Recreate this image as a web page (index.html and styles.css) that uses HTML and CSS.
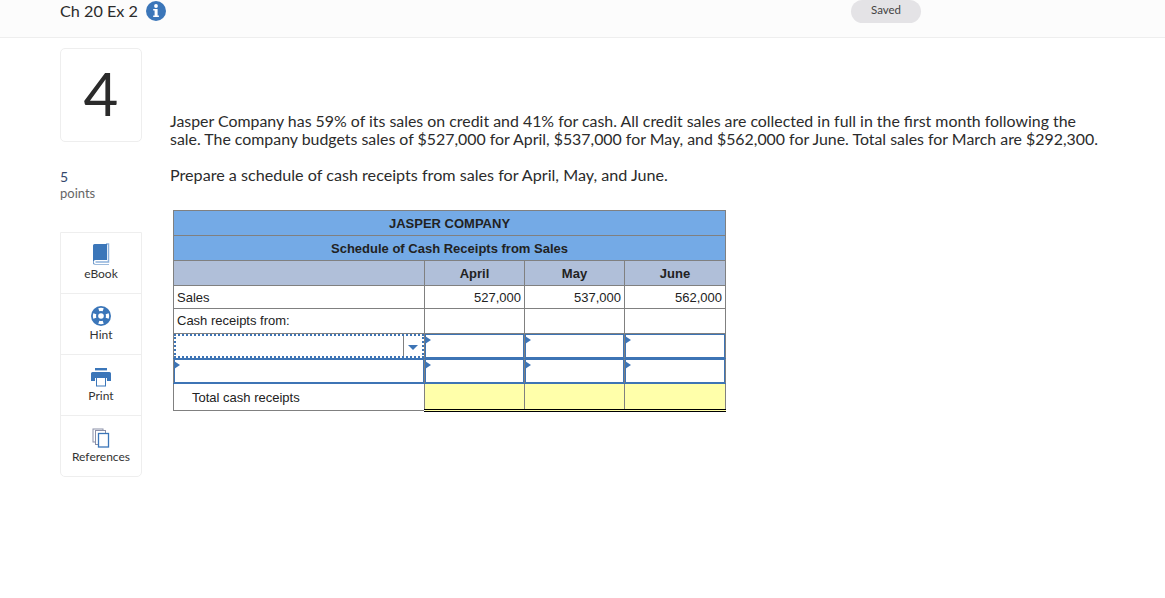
FILE: index.html
```html
<!DOCTYPE html>
<html lang="en">
<head>
  <meta charset="UTF-8">
  <title>Ch 20 Ex 2</title>
  <meta name="viewport" content="width=device-width, initial-scale=1.0">
  <link rel="stylesheet" href="styles.css">
</head>
<body>
  <div class="top-bar">
    <div class="title">
      <span>Ch 20 Ex 2</span>
      <svg class="info-icon" width="20" height="20" viewBox="0 0 20 20">
        <circle cx="10" cy="10" r="10" fill="#3b76b9"/>
        <circle cx="10" cy="5" r="1.9" fill="#fff"/>
        <path d="M7.2 8h4.4v6.4h1.300V16H7.200v-1.600h1.400V9.600H7.200z" fill="#fff"/>
      </svg>
    </div>
    <div class="saved">Saved</div>
  </div>

  <div class="main">
    <div class="side">
      <div class="number-card">4</div>
      <div class="points">
        <div class="points-num">5</div>
        <div class="points-label">points</div>
      </div>
      <div class="tools">
        <div class="tool">
          <svg width="18" height="22" viewBox="0 0 18 22">
            <path d="M14 1h2.500v18H3.500" fill="none" stroke="#8fb2dc" stroke-width="1.500"/>
            <path d="M1 18.500V2.500A1.500 1.500 0 0 1 2.500 1H15v16H3.500a2 2 0 0 0 0 4H17v.6H3A2 2 0 0 1 1 19.500z" fill="#3b76b9"/>
          </svg>
          <span>eBook</span>
        </div>
        <div class="tool">
          <svg width="20" height="20" viewBox="0 0 20 20">
            <circle cx="10" cy="10" r="10" fill="#3b76b9"/>
            <circle cx="10" cy="10" r="2.800" fill="#fff"/>
            <path d="M7.800 3.800a6.600 6.600 0 0 1 4.400 0M16.200 7.800a6.600 6.600 0 0 1 0 4.400M12.200 16.200a6.600 6.600 0 0 1-4.400 0M3.800 12.200a6.600 6.600 0 0 1 0-4.400" fill="none" stroke="#fff" stroke-width="3.200"/>
          </svg>
          <span>Hint</span>
        </div>
        <div class="tool">
          <svg width="20" height="20" viewBox="0 0 20 20">
            <rect x="4" y="1" width="12" height="2.400" fill="#3b76b9"/>
            <path d="M1.500 5h17A1.500 1.500 0 0 1 20 6.500V14h-4v-3H4v3H0V6.500A1.500 1.500 0 0 1 1.500 5z" fill="#3b76b9"/>
            <rect x="5.500" y="10.500" width="9" height="8.500" fill="#fff" stroke="#3b76b9"/>
          </svg>
          <span>Print</span>
        </div>
        <div class="tool">
          <svg width="18" height="20" viewBox="0 0 18 20">
            <rect x="1" y="1" width="10" height="13" fill="#fff" stroke="#8a8fa8"/>
            <rect x="3.500" y="2.500" width="10" height="14" fill="#fff" stroke="#8a8fa8"/>
            <rect x="6.500" y="5.500" width="10" height="13.500" fill="#fff" stroke="#3b76b9" stroke-width="1.300"/>
          </svg>
          <span>References</span>
        </div>
      </div>
    </div>

    <div class="content">
      <p class="question">Jasper Company has 59% of its sales on credit and 41% for cash. All credit sales are collected in full in the first month following the sale. The company budgets sales of $527,000 for April, $537,000 for May, and $562,000 for June. Total sales for March are $292,300.</p>
      <p class="question prepare">Prepare a schedule of cash receipts from sales for April, May, and June.</p>

      <table class="schedule">
        <colgroup>
          <col class="col-label">
          <col class="col-month">
          <col class="col-month">
          <col class="col-june">
        </colgroup>
        <tr class="head-blue"><th colspan="4">JASPER COMPANY</th></tr>
        <tr class="head-blue"><th colspan="4">Schedule of Cash Receipts from Sales</th></tr>
        <tr class="head-grey"><th></th><th>April</th><th>May</th><th>June</th></tr>
        <tr class="row-sales">
          <td>Sales</td><td class="num">527,000</td><td class="num">537,000</td><td class="num">562,000</td>
        </tr>
        <tr class="row-from">
          <td>Cash receipts from:</td><td></td><td></td><td></td>
        </tr>
        <tr class="row-input">
          <td class="cell-select"><div class="select-box"><span class="select-arrow"></span></div></td>
          <td><div class="input-box"><i class="flag"></i></div></td>
          <td><div class="input-box"><i class="flag"></i></div></td>
          <td><div class="input-box"><i class="flag"></i></div></td>
        </tr>
        <tr class="row-input">
          <td><div class="input-box"><i class="flag"></i></div></td>
          <td><div class="input-box"><i class="flag"></i></div></td>
          <td><div class="input-box"><i class="flag"></i></div></td>
          <td><div class="input-box"><i class="flag"></i></div></td>
        </tr>
        <tr class="row-total">
          <td class="total-label">Total cash receipts</td>
          <td class="total"></td><td class="total"></td><td class="total"></td>
        </tr>
      </table>
    </div>
  </div>
</body>
</html>
```

FILE: styles.css
```css
* {
  box-sizing: border-box;
}

body {
  margin: 0;
  background: #fff;
  font-family: 'Lato', sans-serif;
  color: #2b2b2b;
}

.top-bar {
  height: 38px;
  padding: 0 244px 0 60px;
  background: #fcfcfc;
  border-bottom: 1px solid #eee;
  display: flex;
  justify-content: space-between;
  align-items: flex-start;
}

.title {
  display: flex;
  align-items: center;
  gap: 8px;
  height: 21px;
  font-size: 16.2px;
}

.saved {
  width: 70px;
  height: 23px;
  background: #e4e3e6;
  border-radius: 12px;
  font-size: 11.5px;
  line-height: 20px;
  text-align: center;
  color: #444;
}

.main {
  display: flex;
  padding-left: 60px;
}

.side {
  width: 82px;
  padding-top: 10px;
}

.number-card {
  height: 94px;
  border: 1px solid #eee;
  border-radius: 5px;
  font-size: 60px;
  line-height: 88px;
  text-align: center;
  color: #2b2b2b;
}

.points {
  margin-top: 26px;
  color: #555;
}

.points-num {
  font-size: 14px;
  line-height: 17px;
  color: #33476b;
}

.points-label {
  font-size: 13px;
  line-height: 16px;
  color: #666;
}

.tools {
  margin-top: 31px;
  border: 1px solid #eee;
  border-radius: 0 0 5px 5px;
}

.tool {
  height: 61px;
  border-bottom: 1px solid #eee;
  display: flex;
  flex-direction: column;
  align-items: center;
  justify-content: flex-end;
  gap: 1px;
  padding-bottom: 12px;
  font-size: 12px;
  color: #333;
}

.tool:last-child {
  height: 60px;
  border-bottom: none;
}

.content {
  margin-left: 28px;
  padding-top: 74px;
}

.question {
  margin: 0;
  width: 939px;
  font-size: 15.9px;
  line-height: 18px;
}

.prepare {
  margin-top: 18px;
  font-size: 16.15px;
}

.schedule {
  margin: 26px 0 0 3px;
  width: 552px;
  table-layout: fixed;
  border-collapse: collapse;
  font-family: 'Liberation Sans', sans-serif;
  font-size: 13px;
  color: #222;
}

.col-label {
  width: 251px;
}

.col-month {
  width: 100px;
}

.col-june {
  width: 101px;
}

.schedule th,
.schedule td {
  border: 1px solid #808080;
  padding: 0;
}

.schedule th {
  height: 25px;
  padding-top: 1px;
  font-size: 13px;
  text-align: center;
}

.head-blue th {
  background: #74aae6;
}

.head-grey th {
  background: #b0bfd9;
}

.schedule .row-sales td {
  height: 23px;
  padding: 0 3px;
}

.schedule .row-from td {
  height: 25px;
  padding: 0 3px 2px;
}

.num {
  text-align: right;
}

.row-input td {
  height: 25px;
  position: relative;
}

.schedule .row-input td {
  border-bottom-color: #3d74b5;
}

.input-box {
  height: 24px;
  border: 1px solid #3d74b5;
  position: relative;
}

.flag {
  position: absolute;
  left: -1px;
  top: 1px;
  border-left: 6px solid #3d74b5;
  border-top: 4px solid transparent;
  border-bottom: 4px solid transparent;
}

.select-box {
  height: 24px;
  border: 2px dotted #3d74b5;
  position: relative;
}

.select-arrow {
  position: absolute;
  right: 0;
  top: 0;
  bottom: 0;
  width: 19px;
  border-left: 1px solid #808080;
}

.select-arrow::after {
  content: "";
  position: absolute;
  left: 4px;
  top: 9px;
  border-top: 5px solid #3d74b5;
  border-left: 5px solid transparent;
  border-right: 5px solid transparent;
}

.row-total td {
  height: 27px;
}

.schedule .total-label {
  padding-left: 18px;
}

.schedule td.total {
  background: #ffffaa;
  border-top: 1px solid #000;
  border-bottom: 3px double #000;
}
```
